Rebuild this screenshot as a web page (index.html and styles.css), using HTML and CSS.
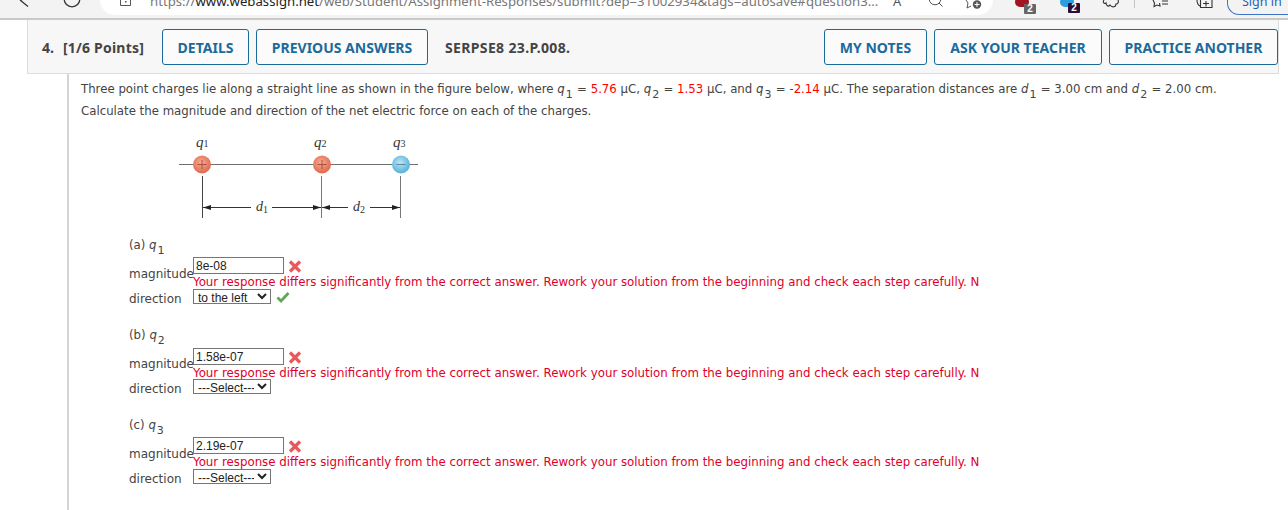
FILE: index.html
```html
<!DOCTYPE html>
<html lang="en">
<head>
<meta charset="utf-8">
<title>WebAssign question</title>
<link rel="stylesheet" href="styles.css">
</head>
<body>
<header class="chrome">
  <svg class="back" width="16" height="18" viewBox="0 0 16 18"><path d="M10 -2 L2 0 M2 0 L10 6.500" fill="none" stroke="#333" stroke-width="1.300"/></svg>
  <svg class="reload" width="20" height="18" viewBox="0 0 20 18"><circle cx="10" cy="-1" r="7.800" fill="none" stroke="#333" stroke-width="1.300"/></svg>
  <div class="address">
    <svg class="site" width="11" height="7" viewBox="0 0 11 7"><path d="M0.500 0 V5.500 H10.500 V0" fill="none" stroke="#555"/><rect x="5" y="1" width="1.500" height="1.500" fill="#555"/></svg>
    <span class="url">https://<b>www.webassign.net</b>/web/Student/Assignment-Responses/submit?dep=31002934&amp;tags=autosave#question3...</span>
    <span class="addr-tools">
      <span class="read">A<sup>&#8217;</sup></span>
      <svg class="tool-search" width="18" height="9" viewBox="0 0 18 9"><circle cx="8" cy="-1" r="5.800" fill="none" stroke="#555"/><path d="M12 3 L15.500 6.500" stroke="#555"/></svg>
      <svg class="tool-star" width="20" height="9" viewBox="0 0 20 9"><path d="M1 0 L3 3 L2 8 L6 6" stroke="#555" fill="none"/><circle cx="12" cy="4.500" r="4.200" fill="#555"/><path d="M9.500 4.500 H14.500 M12 2 V7" stroke="#fff"/></svg>
    </span>
  </div>
  <div class="ext ext-red"><i class="ext-mark red"></i><span class="badge grey">2</span></div>
  <div class="ext ext-blue"><i class="ext-mark blue"></i><span class="badge navy">2</span></div>
  <svg class="puzzle" width="18" height="9" viewBox="0 0 18 9"><path d="M2 0 C0 3 3 4 4 3 C4 6 7 7 8 5 C10 8 14 7 14 4 C16 4 17 2 16 0" fill="none" stroke="#333" stroke-width="1.100"/></svg>
  <i class="sep"></i>
  <svg class="fav" width="18" height="9" viewBox="0 0 18 9"><path d="M2 0 L3.500 3 L3 6.500 L6 5 L9 6 L8.500 3 M11 1 H17 M11 4 H17" fill="none" stroke="#333" stroke-width="1.100"/></svg>
  <svg class="coll" width="18" height="9" viewBox="0 0 18 9"><path d="M1 0 C1 3 2 5 4 6 M4.500 0 V7.500 H16 V0 M10 1 V6.500 M7 3.500 H13" fill="none" stroke="#333" stroke-width="1.100"/></svg>
  <div class="signin">Sign in</div>
</header>

<main class="page">
  <section class="qhead">
    <div class="qnum">4.</div>
    <div class="qpts">[1/6 Points]</div>
    <button class="btn btn-details">DETAILS</button>
    <button class="btn btn-prev">PREVIOUS ANSWERS</button>
    <div class="qref">SERPSE8 23.P.008.</div>
    <div class="head-right">
      <button class="btn btn-notes">MY NOTES</button>
      <button class="btn btn-ask">ASK YOUR TEACHER</button>
      <button class="btn btn-prac">PRACTICE ANOTHER</button>
    </div>
  </section>

  <section class="qbody">
    <p class="stmt">Three point charges lie along a straight line as shown in the figure below, where <var>q</var><sub>1</sub> = <em>5.76</em> μC, <var>q</var><sub>2</sub> = <em>1.53</em> μC, and <var>q</var><sub>3</sub> = <em>-2.14</em> μC. The separation distances are <var>d</var><sub>1</sub> = 3.00 cm and <var>d</var><sub>2</sub> = 2.00 cm.</p>
    <p class="stmt stmt2">Calculate the magnitude and direction of the net electric force on each of the charges.</p>

    <svg class="figure" width="260" height="95" viewBox="0 0 260 95">
      <defs>
        <radialGradient id="pos" cx="45%" cy="40%" r="60%"><stop offset="0" stop-color="#f6ad96"/><stop offset="1" stop-color="#e0674a"/></radialGradient>
        <radialGradient id="neg" cx="45%" cy="40%" r="60%"><stop offset="0" stop-color="#bfe5f3"/><stop offset="1" stop-color="#52b0d8"/></radialGradient>
      </defs>
      <text class="fq" x="27" y="17">q<tspan class="fs" dy="0">1</tspan></text>
      <text class="fq" x="145" y="17">q<tspan class="fs" dy="0">2</tspan></text>
      <text class="fq" x="224" y="17">q<tspan class="fs" dy="0">3</tspan></text>
      <path d="M10 34.500 H249" stroke="#707070" stroke-width="1"/>
      <circle cx="33" cy="34.500" r="9" fill="url(#pos)"/>
      <circle cx="153" cy="34.500" r="9" fill="url(#pos)"/>
      <circle cx="232" cy="34.500" r="9" fill="url(#neg)"/>
      <path d="M28.500 34.500 H37.500 M33 30 V39 M148.500 34.500 H157.500 M153 30 V39" stroke="#a8503c" stroke-width="1"/>
      <path d="M227.500 34.500 H236.500" stroke="#5b8aa0" stroke-width="1"/>
      <path d="M33.500 46 V88" stroke="#444" stroke-width="1"/>
      <path d="M152.500 46 V88 M231.500 46 V88" stroke="#777" stroke-width="1"/>
      <path d="M34 77.500 H82 M103 77.500 H152 M153 77.500 H179 M201 77.500 H231" stroke="#333" stroke-width="1"/>
      <path d="M34 77.500 L42 75 V80 Z M152 77.500 L144 75 V80 Z M153 77.500 L161 75 V80 Z M231 77.500 L223 75 V80 Z" fill="#222"/>
      <text class="fd" x="87" y="81">d<tspan class="fs" dy="2">1</tspan></text>
      <text class="fd" x="184" y="81">d<tspan class="fs" dy="2">2</tspan></text>
    </svg>

    <div class="part">
      <div class="plabel">(a) <var>q</var><sub>1</sub></div>
      <div class="row row-mag">
        <span class="lab">magnitude</span>
        <div class="ans">
          <div class="ansline"><input class="inp" value="8e-08" readonly><svg class="mark" width="14" height="13" viewBox="0 0 14 13"><path d="M2 1.500 L12 11.500 M12 1.500 L2 11.500" stroke="#e9595c" stroke-width="3.200"/></svg></div>
          <div class="err">Your response differs significantly from the correct answer. Rework your solution from the beginning and check each step carefully. N</div>
        </div>
      </div>
      <div class="row row-dir">
        <span class="lab">direction</span>
        <select class="sel"><option>to the left</option></select>
        <svg class="mark mark-ok" width="14" height="12" viewBox="0 0 14 12"><path d="M1.500 6.500 L5 10 L12.500 2" fill="none" stroke="#5fa858" stroke-width="2.800"/></svg>
      </div>
    </div>

    <div class="part part-b">
      <div class="plabel">(b) <var>q</var><sub>2</sub></div>
      <div class="row row-mag">
        <span class="lab">magnitude</span>
        <div class="ans">
          <div class="ansline"><input class="inp" value="1.58e-07" readonly><svg class="mark" width="14" height="13" viewBox="0 0 14 13"><path d="M2 1.500 L12 11.500 M12 1.500 L2 11.500" stroke="#e9595c" stroke-width="3.200"/></svg></div>
          <div class="err">Your response differs significantly from the correct answer. Rework your solution from the beginning and check each step carefully. N</div>
        </div>
      </div>
      <div class="row row-dir">
        <span class="lab">direction</span>
        <select class="sel"><option>---Select---</option></select>
      </div>
    </div>

    <div class="part">
      <div class="plabel">(c) <var>q</var><sub>3</sub></div>
      <div class="row row-mag">
        <span class="lab">magnitude</span>
        <div class="ans">
          <div class="ansline"><input class="inp" value="2.19e-07" readonly><svg class="mark" width="14" height="13" viewBox="0 0 14 13"><path d="M2 1.500 L12 11.500 M12 1.500 L2 11.500" stroke="#e9595c" stroke-width="3.200"/></svg></div>
          <div class="err">Your response differs significantly from the correct answer. Rework your solution from the beginning and check each step carefully. N</div>
        </div>
      </div>
      <div class="row row-dir">
        <span class="lab">direction</span>
        <select class="sel"><option>---Select---</option></select>
      </div>
    </div>
  </section>
</main>
</body>
</html>
```
FILE: styles.css
```css
* { box-sizing: border-box; }
html, body { margin: 0; padding: 0; }
body {
  width: 1288px; height: 510px; overflow: hidden; background: #fff;
  font-family: "DejaVu Sans", sans-serif; font-size: 11.750px; color: #444;
}
.chrome {
  height: 20px; background: #f3f3f3; border-bottom: 2px solid #c9c9c9;
  display: flex; align-items: flex-start; overflow: hidden;
}
.chrome svg { flex: none; }
.back { margin-left: 18px; }
.reload { margin-left: 28px; }
.address {
  margin-left: 18px; width: 893px; height: 15px; background: #fff; flex: none;
  border-radius: 0 0 16px 16px; display: flex; align-items: flex-end;
  padding: 0 0 3px 20px; overflow: hidden;
}
.site { align-self: flex-start; }
.url {
  margin-left: 19px; margin-bottom: 3px; width: 743px; flex: none; overflow: hidden;
  font: 13.200px/16px "Noto Sans", sans-serif; color: #777; white-space: nowrap;
}
.url b { font-weight: 400; color: #222; }
.addr-tools {
  display: flex; align-items: flex-end; margin-bottom: 3px; flex: none;
  color: #555; font: 13px/16px "Noto Sans", sans-serif;
}
.read { width: 24px; }
.read sup { font-size: 8px; line-height: 0; }
.tool-search { margin-left: 10px; }
.tool-star { margin-left: 20px; }
.ext { position: relative; flex: none; height: 15px; }
.ext-red { margin-left: 22px; width: 21px; }
.ext-blue { margin-left: 24px; width: 20px; }
.ext-mark { position: absolute; left: 0; top: -3px; width: 14px; height: 10px; border-radius: 5px; }
.red { background: #a2141f; }
.blue { background: #2a9fe0; }
.badge {
  position: absolute; width: 12px; height: 10px; color: #fff;
  font: 700 10px/10px "Liberation Sans", sans-serif; text-align: center; border-radius: 1px;
}
.grey { background: #666; left: 9px; top: 4px; }
.navy { background: #2a0f3d; left: 8px; top: 3px; }
.puzzle { margin-left: 22px; }
.sep { width: 1px; height: 8px; background: #c4c4c4; margin-left: 14px; flex: none; }
.fav { margin-left: 16px; }
.coll { margin-left: 27px; }
.signin {
  margin-left: 13px; width: 80px; height: 15px; flex: none; overflow: hidden;
  border: 1px solid #3f73c4; border-top: 0; border-radius: 0 0 12px 12px;
  padding-left: 14px; color: #1f5fbf; font: 12.500px/3px "Noto Sans", sans-serif;
}
.page { display: flex; flex-direction: column; }
.qhead {
  margin-left: 27px; margin-right: 9px; height: 54px; background: #f7f7f7;
  border: 1px solid #dcdcdc; border-top: 0;
  display: flex; align-items: center; padding-left: 14px;
  font: 700 14px/18px "Noto Sans", sans-serif; color: #444;
}
.qnum { width: 21px; padding-top: 2px; }
.qpts { width: 99px; padding-top: 2px; letter-spacing: 0.200px; }
.qref { padding-top: 2px; letter-spacing: 0.350px; }
.btn {
  height: 36px; border: 1px solid #1b6a9c; border-radius: 3px; background: #fbfbfb;
  color: #1b6a9c; font: 700 14px/16px "Noto Sans", sans-serif; padding: 2px 0 0; flex: none;
}
.btn-details { width: 87px; margin-right: 7px; }
.btn-prev { width: 172px; margin-right: 17px; }
.head-right { margin-left: auto; display: flex; gap: 7px; }
.btn-notes { width: 103px; }
.btn-ask { width: 168px; }
.btn-prac { width: 169px; }
.qbody {
  margin-left: 67px; border-left: 2px solid #d4d4d4; padding-left: 12px; height: 437px;
}
.stmt { margin: 6px 0 0; line-height: 18px; white-space: nowrap; }
.stmt2 { margin-top: 4px; }
var { font-style: italic; }
sub { font-size: 11px; line-height: 0; vertical-align: -5px; margin-left: 1px; margin-right: 0.600px; }
em { font-style: normal; color: #f00; }
.figure { display: block; margin: 10px 0 11px 88px; }
.fq { font: italic 15px "Liberation Serif", serif; fill: #333; }
.fd { font: italic 14px "Liberation Serif", serif; fill: #333; }
.fs { font-size: 10px; font-style: normal; }
.part { margin-left: 48px; height: 90px; }
.plabel { height: 21px; line-height: 18px; }
.row { display: flex; }
.row-mag { height: 32px; }
.lab { width: 64px; flex: none; line-height: 18px; font-size: 12px; }
.row-mag .lab { margin-top: 8px; }
.row-dir .lab { align-self: flex-start; margin-top: 1px; }
.ans { display: flex; flex-direction: column; }
.part-b .ans { margin-top: 1px; }
.ansline { display: flex; align-items: flex-start; height: 17px; }
.inp {
  width: 91px; height: 17px; border: 1px solid #767676; padding: 0 2px; border-radius: 0;
  font: 12px/15px "Liberation Sans", sans-serif; color: #222; outline: none; background: #fff;
}
.mark { margin-left: 4px; flex: none; }
.ansline .mark { margin-top: 3px; }
.mark-ok { margin-left: 5px; margin-top: 1px; }
.err { color: #e0002a; font-size: 11.800px; white-space: nowrap; line-height: 14px; margin-top: 1px; }
.row-dir { align-items: center; height: 15px; }
.sel {
  width: 78px; height: 15px; border: 1px solid #767676; border-radius: 0; padding: 0; background: #fff;
  font: 12px/13px "Liberation Sans", sans-serif; color: #222;
}
```
